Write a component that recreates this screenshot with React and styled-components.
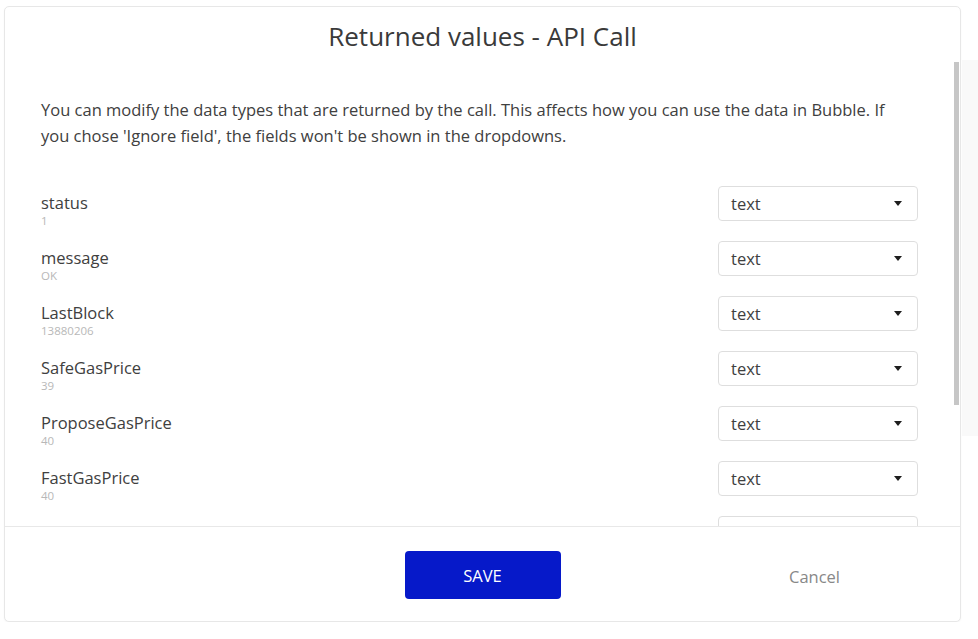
import React from 'react';
import styled, { createGlobalStyle } from 'styled-components';

const GlobalStyle = createGlobalStyle`
  html, body {
    margin: 0;
    padding: 0;
    background: #ffffff;
    font-family: "Open Sans", "Liberation Sans", sans-serif;
  }
  * { box-sizing: border-box; }
`;

const fields = [
  { name: 'status', sample: '1' },
  { name: 'message', sample: 'OK' },
  { name: 'LastBlock', sample: '13880206' },
  { name: 'SafeGasPrice', sample: '39' },
  { name: 'ProposeGasPrice', sample: '40' },
  { name: 'FastGasPrice', sample: '40' },
  { name: 'suggestBaseFee', sample: '38.37' },
  { name: 'gasUsedRatio', sample: '0.55' },
];

export default function App() {
  return (
    <>
      <GlobalStyle />
      <Page>
        <Modal>
          <Header>Returned values - API Call</Header>
          <Body>
            <Content>
              <Intro>
                You can modify the data types that are returned by the call. This affects how you can use the data in Bubble. If
                you chose 'Ignore field', the fields won't be shown in the dropdowns.
              </Intro>
              <Fields>
                {fields.map((f) => (
                  <FieldRow key={f.name}>
                    <FieldInfo>
                      <FieldName>{f.name}</FieldName>
                      <FieldSample>{f.sample}</FieldSample>
                    </FieldInfo>
                    <Dropdown>
                      <span>text</span>
                      <Caret />
                    </Dropdown>
                  </FieldRow>
                ))}
              </Fields>
            </Content>
            <ScrollThumb />
          </Body>
          <Footer>
            <SaveButton>SAVE</SaveButton>
            <CancelLink>Cancel</CancelLink>
          </Footer>
        </Modal>
        <SideShade />
      </Page>
    </>
  );
}

const Page = styled.div`
  display: flex;
  align-items: flex-start;
  padding: 6px 0 0 4px;
`;

const Modal = styled.div`
  width: 957px;
  height: 616px;
  display: flex;
  flex-direction: column;
  background: #fff;
  border: 1px solid #e7e7e7;
  border-radius: 5px;
  box-shadow: 0 1px 2px rgba(0, 0, 0, 0.04);
  overflow: hidden;
  flex-shrink: 0;
`;

const SideShade = styled.div`
  margin-top: 54px;
  margin-left: 1px;
  width: 17px;
  height: 376px;
  background: #f9f9f9;
`;

const Header = styled.div`
  height: 55px;
  display: flex;
  align-items: center;
  justify-content: center;
  padding-top: 2px;
  font-size: 26px;
  color: #3a3a3a;
`;

const Body = styled.div`
  position: relative;
  flex: 1;
  overflow: hidden;
`;

const Content = styled.div`
  padding: 35px 42px 0 36px;
`;

const ScrollThumb = styled.div`
  position: absolute;
  top: 0;
  right: 1px;
  width: 5px;
  height: 343px;
  background: #c6c6c6;
`;

const Intro = styled.p`
  max-width: 870px;
  margin: 0 0 37px;
  font-size: 16.5px;
  line-height: 26px;
  color: #404040;
`;

const Fields = styled.div`
  display: flex;
  flex-direction: column;
  gap: 20px;
`;

const FieldRow = styled.div`
  display: flex;
  justify-content: space-between;
  align-items: flex-start;
  height: 35px;
`;

const FieldInfo = styled.div`
  display: flex;
  flex-direction: column;
  padding-top: 7px;
`;

const FieldName = styled.div`
  font-size: 16.5px;
  line-height: 20px;
  color: #404040;
`;

const FieldSample = styled.div`
  font-size: 11.5px;
  line-height: 15px;
  color: #b8b8b8;
`;

const Dropdown = styled.div`
  width: 200px;
  height: 35px;
  display: flex;
  align-items: center;
  justify-content: space-between;
  padding: 0 15px 0 12px;
  border: 1px solid #dedede;
  border-radius: 4px;
  font-size: 16.5px;
  color: #404040;
`;

const Caret = styled.span`
  width: 0;
  height: 0;
  border-left: 4.5px solid transparent;
  border-right: 4.5px solid transparent;
  border-top: 5px solid #1e1e1e;
`;

const Footer = styled.div`
  height: 95px;
  border-top: 1px solid #e8e8e8;
  display: grid;
  grid-template-columns: 1fr auto 1fr;
  align-items: start;
  padding-top: 24px;
`;

const SaveButton = styled.button`
  grid-column: 2;
  width: 156px;
  height: 48px;
  border: none;
  border-radius: 4px;
  background: #0619c9;
  color: #fff;
  font-family: "Open Sans", "Liberation Sans", sans-serif;
  font-size: 16.5px;
  font-weight: 400;
  cursor: pointer;
`;

const CancelLink = styled.span`
  grid-column: 3;
  justify-self: end;
  margin-right: 120px;
  margin-top: 14px;
  font-size: 16.5px;
  color: #888;
  cursor: pointer;
`;
